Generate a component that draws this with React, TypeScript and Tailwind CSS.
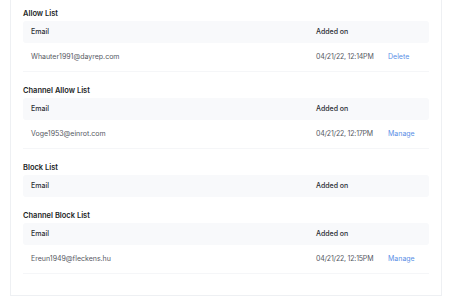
import React from 'react';

type Entry = { email: string; added: string; action?: string };

const sections: { title: string; rows: Entry[] }[] = [
  { title: 'Allow List', rows: [{ email: 'Whauter1991@dayrep.com', added: '04/21/22, 12:14PM', action: 'Delete' }] },
  { title: 'Channel Allow List', rows: [{ email: 'Voge1953@einrot.com', added: '04/21/22, 12:17PM', action: 'Manage' }] },
  { title: 'Block List', rows: [] },
  { title: 'Channel Block List', rows: [{ email: 'Ereun1949@fleckens.hu', added: '04/21/22, 12:15PM', action: 'Manage' }] },
];

function ListTable({ title, rows }: { title: string; rows: Entry[] }) {
  return (
    <div>
      <h3 className="h-[15px] leading-[15px] text-[7.5px] font-semibold text-[#1c1f26]">{title}</h3>
      <div className="flex h-[22px] items-center rounded-[3px] bg-[#f8f9fb] px-2 text-[7px] font-medium text-[#2b2e35]">
        <span className="flex-1">Email</span>
        <span className="w-[72px]">Added on</span>
        <span className="w-[33px]" />
      </div>
      {rows.map((r) => (
        <div key={r.email} className="flex h-[29px] items-center border-b border-[#f5f6f8] px-2 text-[7px] text-[#55585f]">
          <span className="flex-1">{r.email}</span>
          <span className="w-[72px] tracking-[-0.2px]">{r.added}</span>
          <span className="w-[33px] text-[#5a8fe6]">{r.action}</span>
        </div>
      ))}
    </div>
  );
}

export default function App() {
  return (
    <div className="min-h-[303px] bg-white pl-[10px]" style={{ fontFamily: 'Inter, "Open Sans", sans-serif' }}>
      <div className="w-[432px] border-x border-b border-[#eef0f3] px-3 pt-[6px] pb-[21px]">
        <div className="flex flex-col gap-[11px]">
          {sections.map((s) => (
            <ListTable key={s.title} title={s.title} rows={s.rows} />
          ))}
        </div>
      </div>
    </div>
  );
}
